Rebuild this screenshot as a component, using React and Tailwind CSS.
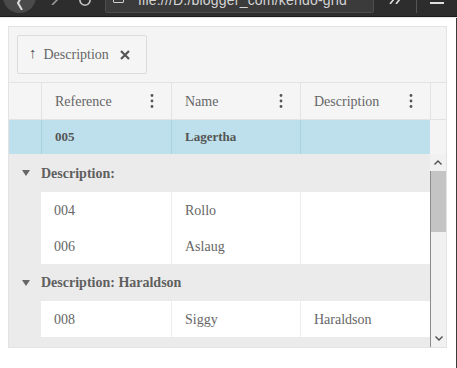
import React from 'react';

const KebabIcon = () => (
  <svg width="4" height="14" viewBox="0 0 4 14" className="fill-[#555]">
    <circle cx="2" cy="1.5" r="1.4" />
    <circle cx="2" cy="7" r="1.4" />
    <circle cx="2" cy="12.5" r="1.4" />
  </svg>
);

const BrowserBar = () => (
  <div className="h-[17px] bg-[#2d2d2d] border-b border-[#1b1b1b] relative overflow-hidden flex items-end">
    {/* back button, mostly cut off at the top */}
    <div className="ml-[3px] mb-[3px] w-[33px] h-[33px] rounded-full bg-[#4a4a4a] shrink-0 flex items-end justify-center pb-[3px]">
      <svg width="10" height="14" viewBox="0 0 10 14" className="stroke-[#ddd]" fill="none" strokeWidth="2">
        <path d="M7 0 L3 7 L7 14" />
      </svg>
    </div>
    <svg width="8" height="10" viewBox="0 0 8 10" className="ml-[15px] mb-[11px] stroke-[#9a9a9a] shrink-0" fill="none" strokeWidth="1.6">
      <path d="M1 0 L6 5 L1 10" />
    </svg>
    <svg width="12" height="12" viewBox="0 0 12 12" className="ml-[20px] mb-[10px] stroke-[#c8c8c8] shrink-0" fill="none" strokeWidth="1.6">
      <path d="M1.5 4 A5 5 0 1 0 10.5 4" />
    </svg>
    <div className="ml-[14px] mb-[3px] w-[269px] h-[26px] bg-[#3b3b3b] border border-[#4d4d4d] rounded-[2px] shrink-0 flex items-end pl-[7px] pb-[5px] overflow-hidden">
      <div className="w-[11px] h-[14px] border-[1.5px] border-[#cfcfcf] rounded-[1px] mb-[4px] shrink-0" />
      <span className="ml-[14px] text-[#d4d4d4] text-[14px] leading-none font-['Liberation_Sans',sans-serif] whitespace-nowrap tracking-[0.2px]">
        file:///D:/blogger_com/kendo-grid
      </span>
    </div>
    <svg width="13" height="10" viewBox="0 0 13 10" className="ml-[15px] mb-[12px] stroke-[#e0e0e0] shrink-0" fill="none" strokeWidth="1.6">
      <path d="M1 0 L5 5 L1 10 M7 0 L11 5 L7 10" />
    </svg>
    <div className="ml-[14px] mb-[3px] w-px h-[20px] bg-[#555] shrink-0" />
    <div className="ml-[13px] mb-[12px] w-[14px] h-[2px] bg-[#e0e0e0] shrink-0" />
  </div>
);

const HeaderCell = ({ label, width }) => (
  <div className={`${width} shrink-0 h-full border-l border-[#e3e3e3] flex items-center pl-[13px] pr-[17px] justify-between`}>
    <span className="text-[14px] text-[#666]">{label}</span>
    <KebabIcon />
  </div>
);

const GroupHeader = ({ label, height }) => (
  <div className={`${height} flex items-center bg-[#ebebeb]`}>
    <div className="w-[32px] shrink-0 flex justify-center pl-[2px]">
      <svg width="8" height="6" viewBox="0 0 8 6" className="fill-[#666]">
        <path d="M0 0 H8 L4 6 Z" />
      </svg>
    </div>
    <span className="text-[14px] font-bold text-[#5f5f5f]">{label}</span>
  </div>
);

const DataRow = ({ cells }) => (
  <div className="h-[36px] flex">
    <div className="w-[32px] shrink-0 bg-[#ebebeb]" />
    <div className="flex-1 flex bg-white">
      <div className="w-[130px] shrink-0 flex items-center pl-[13px] text-[14px] text-[#666]">{cells[0]}</div>
      <div className="w-[129px] shrink-0 flex items-center pl-[13px] border-l border-[#ececec] text-[14px] text-[#666]">{cells[1]}</div>
      <div className="w-[130px] shrink-0 flex items-center pl-[13px] border-l border-[#ececec] text-[14px] text-[#666]">{cells[2]}</div>
    </div>
  </div>
);

export default function App() {
  return (
    <div className="w-[457px] h-[368px] bg-white overflow-hidden font-['Liberation_Serif',serif]">
      <BrowserBar />
      <div className="h-px bg-[#e6e6e6]" />
      <div className="flex h-[350px]">
        <div className="flex-1 pl-[8px] pr-[9px] pt-[8px]">
          <div className="border border-[#e3e3e3] bg-[#f4f4f4]">
            {/* group panel */}
            <div className="p-2 border-b border-[#e3e3e3]">
              <div className="w-[130px] h-[39px] border border-[#dcdcdc] rounded-[2px] bg-[#f5f5f5] flex items-center pl-[11px]">
                <span className="text-[15px] text-[#555] leading-none mb-[2px]">↑</span>
                <span className="ml-[7px] text-[14px] text-[#666]">Description</span>
                <svg width="10" height="10" viewBox="0 0 10 10" className="ml-[11px] stroke-[#555]" fill="none" strokeWidth="2.2">
                  <path d="M1 1 L9 9 M9 1 L1 9" />
                </svg>
              </div>
            </div>
            {/* column headers */}
            <div className="h-[37px] flex border-b border-[#e3e3e3] bg-[#f5f5f5]">
              <div className="w-[32px] shrink-0" />
              <HeaderCell label="Reference" width="w-[130px]" />
              <HeaderCell label="Name" width="w-[129px]" />
              <HeaderCell label="Description" width="w-[130px]" />
              <div className="flex-1 border-l border-[#e3e3e3]" />
            </div>
            {/* sticky selected row */}
            <div className="h-[34px] flex">
              <div className="w-[421px] flex bg-[#bde0ec] text-[13px] font-bold text-[#555]">
                <div className="w-[32px] shrink-0" />
                <div className="w-[130px] shrink-0 border-l border-[#a9d1de] flex items-center pl-[13px]">005</div>
                <div className="w-[129px] shrink-0 border-l border-[#a9d1de] flex items-center pl-[13px]">Lagertha</div>
                <div className="w-[130px] shrink-0 border-l border-[#a9d1de]" />
              </div>
              <div className="flex-1 bg-[#f4f4f4]" />
            </div>
            {/* scrolling body */}
            <div className="h-[193px] flex">
              <div className="w-[421px] overflow-hidden bg-[#ebebeb]">
                <GroupHeader label="Description:" height="h-[38px]" />
                <DataRow cells={['004', 'Rollo', '']} />
                <DataRow cells={['006', 'Aslaug', '']} />
                <GroupHeader label="Description: Haraldson" height="h-[37px]" />
                <DataRow cells={['008', 'Siggy', 'Haraldson']} />
              </div>
              <div className="flex-1 flex flex-col bg-[#f1f1f1]">
                <div className="h-[17px] flex items-center justify-center">
                  <svg width="8" height="5" viewBox="0 0 8 5" className="stroke-[#505050]" fill="none" strokeWidth="1.4">
                    <path d="M0.5 4.5 L4 1 L7.5 4.5" />
                  </svg>
                </div>
                <div className="flex-1 flex flex-col border-l border-[#8c8c8c]">
                  <div className="h-[61px] bg-[#c4c4c4]" />
                  <div className="flex-1" />
                  <div className="h-[17px] flex items-center justify-center">
                    <svg width="8" height="5" viewBox="0 0 8 5" className="stroke-[#505050]" fill="none" strokeWidth="1.4">
                      <path d="M0.5 0.5 L4 4 L7.5 0.5" />
                    </svg>
                  </div>
                </div>
              </div>
            </div>
          </div>
        </div>
        <div className="w-px bg-[#3a3a3a]" />
      </div>
    </div>
  );
}
